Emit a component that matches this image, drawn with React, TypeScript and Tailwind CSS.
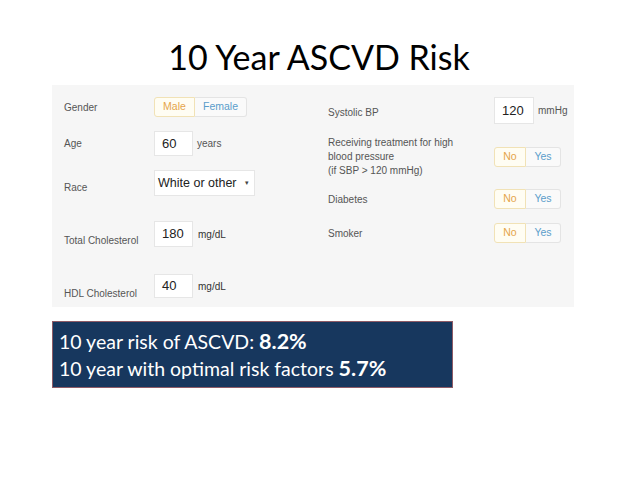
import React from 'react';

const sans = { fontFamily: '"Liberation Sans", Arial, sans-serif' };

// two-part segmented toggle, first option selected
const Toggle: React.FC<{ a: string; b: string; wa: number; wb: number }> = ({ a, b, wa, wb }) => (
  <div className="flex h-[20px] text-[10.5px]" style={sans}>
    <div
      className="flex items-center justify-center rounded-l-[3px] border border-[#f1e2b6] bg-[#fffdf3] text-[#e5a54b]"
      style={{ width: wa }}
    >
      {a}
    </div>
    <div
      className="flex items-center justify-center rounded-r-[3px] border border-l-0 border-[#e4e4e4] bg-[#fafafa] text-[#5a9dca]"
      style={{ width: wb }}
    >
      {b}
    </div>
  </div>
);

const NumBox: React.FC<{ value: string; w?: string; h?: string }> = ({ value, w = 'w-[39px]', h = 'h-[25px]' }) => (
  <div className={`flex items-center ${w} ${h} border border-[#e6e6e6] bg-white pl-[7px] text-[13px] text-[#222]`}>
    {value}
  </div>
);

const Unit: React.FC<{ children: React.ReactNode }> = ({ children }) => (
  <span className="ml-[4px] text-[10px] text-[#555]">{children}</span>
);

export default function App() {
  return (
    <div className="h-[479px] w-[638px] bg-white" style={sans}>
      {/* title */}
      <div className="flex h-[85px] justify-center pt-[40px]">
        <h1 className="text-[34px] leading-[34px] text-black" style={{ fontFamily: 'Lato, "Open Sans", sans-serif' }}>
          10 Year ASCVD Risk
        </h1>
      </div>

      {/* calculator panel */}
      <div className="ml-[52px] flex h-[222px] w-[522px] bg-[#f6f6f6] text-[10px] text-[#555]">
        <div className="flex w-[276px] flex-col pl-[12px]">
          <div className="mt-[12px] flex h-[20px] items-center">
            <span className="w-[90px]">Gender</span>
            <Toggle a="Male" b="Female" wa={41} wb={52} />
          </div>
          <div className="mt-[14px] flex h-[25px] items-center">
            <span className="w-[90px]">Age</span>
            <NumBox value="60" />
            <Unit>years</Unit>
          </div>
          <div className="mt-[14px] flex h-[26px] items-center">
            <span className="w-[90px] pt-[8px]">Race</span>
            <div className="flex h-[26px] w-[101px] items-center justify-between border border-[#e6e6e6] bg-white pl-[3px] pr-[5px] text-[12.5px] text-[#222]">
              <span>White or other</span>
              <span className="text-[7px] text-[#444]">▾</span>
            </div>
          </div>
          <div className="mt-[25px] flex h-[26px] items-center">
            <span className="w-[90px] pt-[12px]">Total Cholesterol</span>
            <NumBox value="180" h="h-[26px]" />
            <span className="ml-[5px] text-[10px] text-[#333]">mg/dL</span>
          </div>
          <div className="mt-[27px] flex h-[24px] items-center">
            <span className="w-[90px] pt-[14px]">HDL Cholesterol</span>
            <NumBox value="40" h="h-[24px]" />
            <span className="ml-[5px] text-[10px] text-[#333]">mg/dL</span>
          </div>
        </div>

        <div className="flex flex-1 flex-col">
          <div className="mt-[12px] flex h-[27px] items-center">
            <span className="w-[166px] pt-[3px]">Systolic BP</span>
            <NumBox value="120" w="w-[40px]" h="h-[27px]" />
            <Unit>mmHg</Unit>
          </div>
          <div className="mt-[12px] flex items-center">
            <span className="w-[166px] leading-[14px]">
              Receiving treatment for high
              <br />
              blood pressure
              <br />
              (if SBP &gt; 120 mmHg)
            </span>
            <Toggle a="No" b="Yes" wa={32} wb={35} />
          </div>
          <div className="mt-[11px] flex h-[20px] items-center">
            <span className="w-[166px]">Diabetes</span>
            <Toggle a="No" b="Yes" wa={32} wb={35} />
          </div>
          <div className="mt-[14px] flex h-[20px] items-center">
            <span className="w-[166px]">Smoker</span>
            <Toggle a="No" b="Yes" wa={32} wb={35} />
          </div>
        </div>
      </div>

      {/* result box */}
      <div
        className="ml-[52px] mt-[14px] flex h-[67px] w-[401px] flex-col justify-center border border-[#8e5b66] bg-[#17375e] pl-[6px] text-[19.5px] leading-[27px] text-white"
        style={{ fontFamily: 'Lato, "Open Sans", sans-serif' }}
      >
        <div>
          10 year risk of ASCVD: <b className="text-[21.5px]">8.2%</b>
        </div>
        <div>
          10 year with optimal risk factors <b className="text-[21.5px]">5.7%</b>
        </div>
      </div>
    </div>
  );
}
